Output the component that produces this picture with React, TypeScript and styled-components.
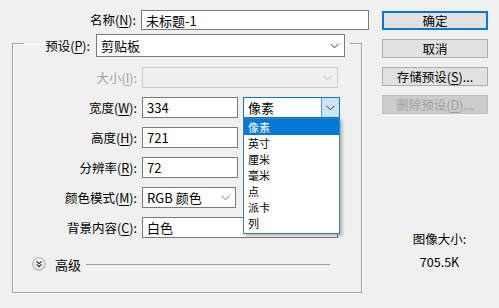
import styled, { createGlobalStyle } from "styled-components";

const GlobalStyle = createGlobalStyle`
  html, body {
    margin: 0;
    padding: 0;
    background: #f0f0f0;
  }
  body {
    width: 499px;
    height: 308px;
    overflow: hidden;
    font-family: "Noto Sans CJK SC", "Noto Sans", sans-serif;
    font-size: 12px;
    color: #000;
  }
`;

const Dialog = styled.div`
  display: flex;
  width: 499px;
  height: 308px;
`;

const Main = styled.div`
  width: 370px;
  padding-top: 10px;
  display: flex;
  flex-direction: column;
`;

const Side = styled.div`
  width: 129px;
  padding: 11px 0 0 12px;
  box-sizing: border-box;
  display: flex;
  flex-direction: column;
  gap: 9px;
`;

const Row = styled.div<{ $h?: number }>`
  display: flex;
  align-items: center;
  gap: 5px;
  height: ${(p) => p.$h ?? 21}px;
`;

const Label = styled.label<{ $w: number; $disabled?: boolean }>`
  width: ${(p) => p.$w}px;
  flex: none;
  text-align: right;
  white-space: nowrap;
  line-height: 20px;
  font-size: 12.5px;
  color: ${(p) => (p.$disabled ? "#a0a0a0" : "#000")};
`;

const Key = styled.span`
  text-decoration: underline;
  text-underline-offset: 2px;
`;

const TextBox = styled.div<{ $w: number }>`
  width: ${(p) => p.$w}px;
  height: 100%;
  box-sizing: border-box;
  border: 1px solid #7a7a7a;
  background: #fff;
  padding-left: 4px;
  line-height: 19px;
  font-size: 13px;
  white-space: nowrap;
`;

const SelectBox = styled.div<{ $w: number; $disabled?: boolean; $focus?: boolean }>`
  position: relative;
  width: ${(p) => p.$w}px;
  height: 100%;
  box-sizing: border-box;
  border: 1px solid
    ${(p) => (p.$disabled ? "#cccccc" : p.$focus ? "#0078d7" : "#7a7a7a")};
  background: ${(p) => (p.$disabled ? "#efefef" : "#fff")};
  display: flex;
  align-items: center;
  padding-left: 4px;
  font-size: 13px;
  white-space: nowrap;
`;

const SelectText = styled.span`
  flex: 1;
  line-height: 19px;
`;

const ArrowCell = styled.span<{ $active?: boolean }>`
  width: 17px;
  align-self: stretch;
  display: flex;
  align-items: center;
  justify-content: center;
  background: ${(p) => (p.$active ? "#cce4f7" : "transparent")};
  border-left: 1px solid ${(p) => (p.$active ? "#569de5" : "transparent")};
  margin: ${(p) => (p.$active ? "0" : "0 1px 0 0")};
`;

const Group = styled.fieldset`
  margin: -1px 0 0 12px;
  width: 350px;
  box-sizing: border-box;
  padding: 10px 0 21px 11px;
  border: 1px solid #a0a0a0;
  box-shadow: inset 1px 1px 0 #fff, 1px 1px 0 #fff;
  display: flex;
  flex-direction: column;
  gap: 9px;
`;

const Legend = styled.legend`
  padding: 5px 5px 0 2px;
  height: 23px;
  box-sizing: content-box;
`;

const PresetRow = styled.div`
  display: flex;
  align-items: center;
  gap: 6px;
  height: 23px;
`;

const Anchor = styled.div`
  position: relative;
  height: 100%;
`;

const DropList = styled.ul`
  position: absolute;
  top: 100%;
  left: 0;
  width: 97px;
  margin: 0;
  padding: 0 0 2px;
  list-style: none;
  background: #fff;
  border: 1px solid #3e7fb5;
  box-sizing: border-box;
  box-shadow: 2px 2px 3px rgba(0, 0, 0, 0.3);
  z-index: 5;
`;

const DropItem = styled.li<{ $selected?: boolean }>`
  height: 16px;
  line-height: 16px;
  padding-left: 4px;
  font-size: 11px;
  background: ${(p) => (p.$selected ? "#0078d7" : "transparent")};
  color: ${(p) => (p.$selected ? "#fff" : "#000")};
`;

const Advanced = styled.div`
  display: flex;
  align-items: center;
  height: 14px;
  margin: 10px 31px 0 8px;
  gap: 9px;
  font-size: 13px;
`;

const Rule = styled.div`
  flex: 1;
  height: 1px;
  background: #a0a0a0;
  margin-left: -4px;
`;

const Button = styled.div<{ $primary?: boolean; $disabled?: boolean }>`
  width: 106px;
  height: 19px;
  box-sizing: border-box;
  border: 1px solid
    ${(p) => (p.$primary ? "#0078d7" : p.$disabled ? "#bfbfbf" : "#adadad")};
  box-shadow: ${(p) => (p.$primary ? "inset 0 0 0 1px #0078d7" : "none")};
  background: ${(p) => (p.$disabled ? "#cccccc" : "#e1e1e1")};
  color: ${(p) => (p.$disabled ? "#a0a0a0" : "#000")};
  text-align: center;
  line-height: 17px;
  font-size: 12.5px;
  white-space: nowrap;
`;

const SizeInfo = styled.div`
  margin-top: 107px;
  text-align: center;
  line-height: 18px;
  font-size: 12.5px;
  display: flex;
  flex-direction: column;
  gap: 5px;
  padding-right: 2px;
`;

const Chevron = ({ color = "#444" }: { color?: string }) => (
  <svg width="9" height="6" viewBox="0 0 9 6">
    <polyline points="0.5,0.8 4.5,4.8 8.5,0.8" fill="none" stroke={color} strokeWidth="1" />
  </svg>
);

const ExpandIcon = () => (
  <svg width="14" height="14" viewBox="0 0 14 14">
    <defs>
      <radialGradient id="adv" cx="40%" cy="35%" r="70%">
        <stop offset="0" stopColor="#ffffff" />
        <stop offset="1" stopColor="#d8d8d8" />
      </radialGradient>
    </defs>
    <circle cx="7" cy="7" r="6.3" fill="url(#adv)" stroke="#a8a8a8" strokeWidth="0.9" />
    <polyline points="4.6,4.5 7,6.6 9.4,4.5" fill="none" stroke="#222" strokeWidth="1.1" />
    <polyline points="4.6,7.3 7,9.4 9.4,7.3" fill="none" stroke="#222" strokeWidth="1.1" />
  </svg>
);

const units = ["像素", "英寸", "厘米", "毫米", "点", "派卡", "列"];

export default function App() {
  return (
    <>
      <GlobalStyle />
      <Dialog>
        <Main>
          <Row $h={20}>
            <Label $w={136}>
              名称(<Key>N</Key>):
            </Label>
            <TextBox $w={228}>未标题-1</TextBox>
          </Row>
          <Group>
            <Legend>
              <PresetRow>
                <Label $w={64}>
                  预设(<Key>P</Key>):
                </Label>
                <SelectBox $w={249}>
                  <SelectText>剪贴板</SelectText>
                  <ArrowCell>
                    <Chevron color="#333" />
                  </ArrowCell>
                </SelectBox>
              </PresetRow>
            </Legend>
            <Row>
              <Label $w={113} $disabled>
                大小(<Key>I</Key>):
              </Label>
              <SelectBox $w={196} $disabled>
                <SelectText />
                <ArrowCell>
                  <Chevron color="#b8b8b8" />
                </ArrowCell>
              </SelectBox>
            </Row>
            <Row>
              <Label $w={113}>
                宽度(<Key>W</Key>):
              </Label>
              <TextBox $w={96}>334</TextBox>
              <Anchor>
                <SelectBox $w={97} $focus>
                  <SelectText>像素</SelectText>
                  <ArrowCell $active>
                    <Chevron color="#333" />
                  </ArrowCell>
                </SelectBox>
                <DropList>
                  {units.map((u, i) => (
                    <DropItem key={u} $selected={i === 0}>
                      {u}
                    </DropItem>
                  ))}
                </DropList>
              </Anchor>
            </Row>
            <Row>
              <Label $w={113}>
                高度(<Key>H</Key>):
              </Label>
              <TextBox $w={96}>721</TextBox>
            </Row>
            <Row>
              <Label $w={113}>
                分辨率(<Key>R</Key>):
              </Label>
              <TextBox $w={96}>72</TextBox>
            </Row>
            <Row>
              <Label $w={113}>
                颜色模式(<Key>M</Key>):
              </Label>
              <SelectBox $w={94}>
                <SelectText>RGB 颜色</SelectText>
                <ArrowCell>
                  <Chevron color="#777" />
                </ArrowCell>
              </SelectBox>
            </Row>
            <Row>
              <Label $w={113}>
                背景内容(<Key>C</Key>):
              </Label>
              <SelectBox $w={196}>
                <SelectText>白色</SelectText>
                <ArrowCell>
                  <Chevron color="#777" />
                </ArrowCell>
              </SelectBox>
            </Row>
            <Advanced>
              <ExpandIcon />
              <span>高级</span>
              <Rule />
            </Advanced>
          </Group>
        </Main>
        <Side>
          <Button $primary>确定</Button>
          <Button>取消</Button>
          <Button>
            存储预设(<Key>S</Key>)...
          </Button>
          <Button $disabled>
            删除预设(<Key>D</Key>)...
          </Button>
          <SizeInfo>
            <span>图像大小:</span>
            <span>705.5K</span>
          </SizeInfo>
        </Side>
      </Dialog>
    </>
  );
}
